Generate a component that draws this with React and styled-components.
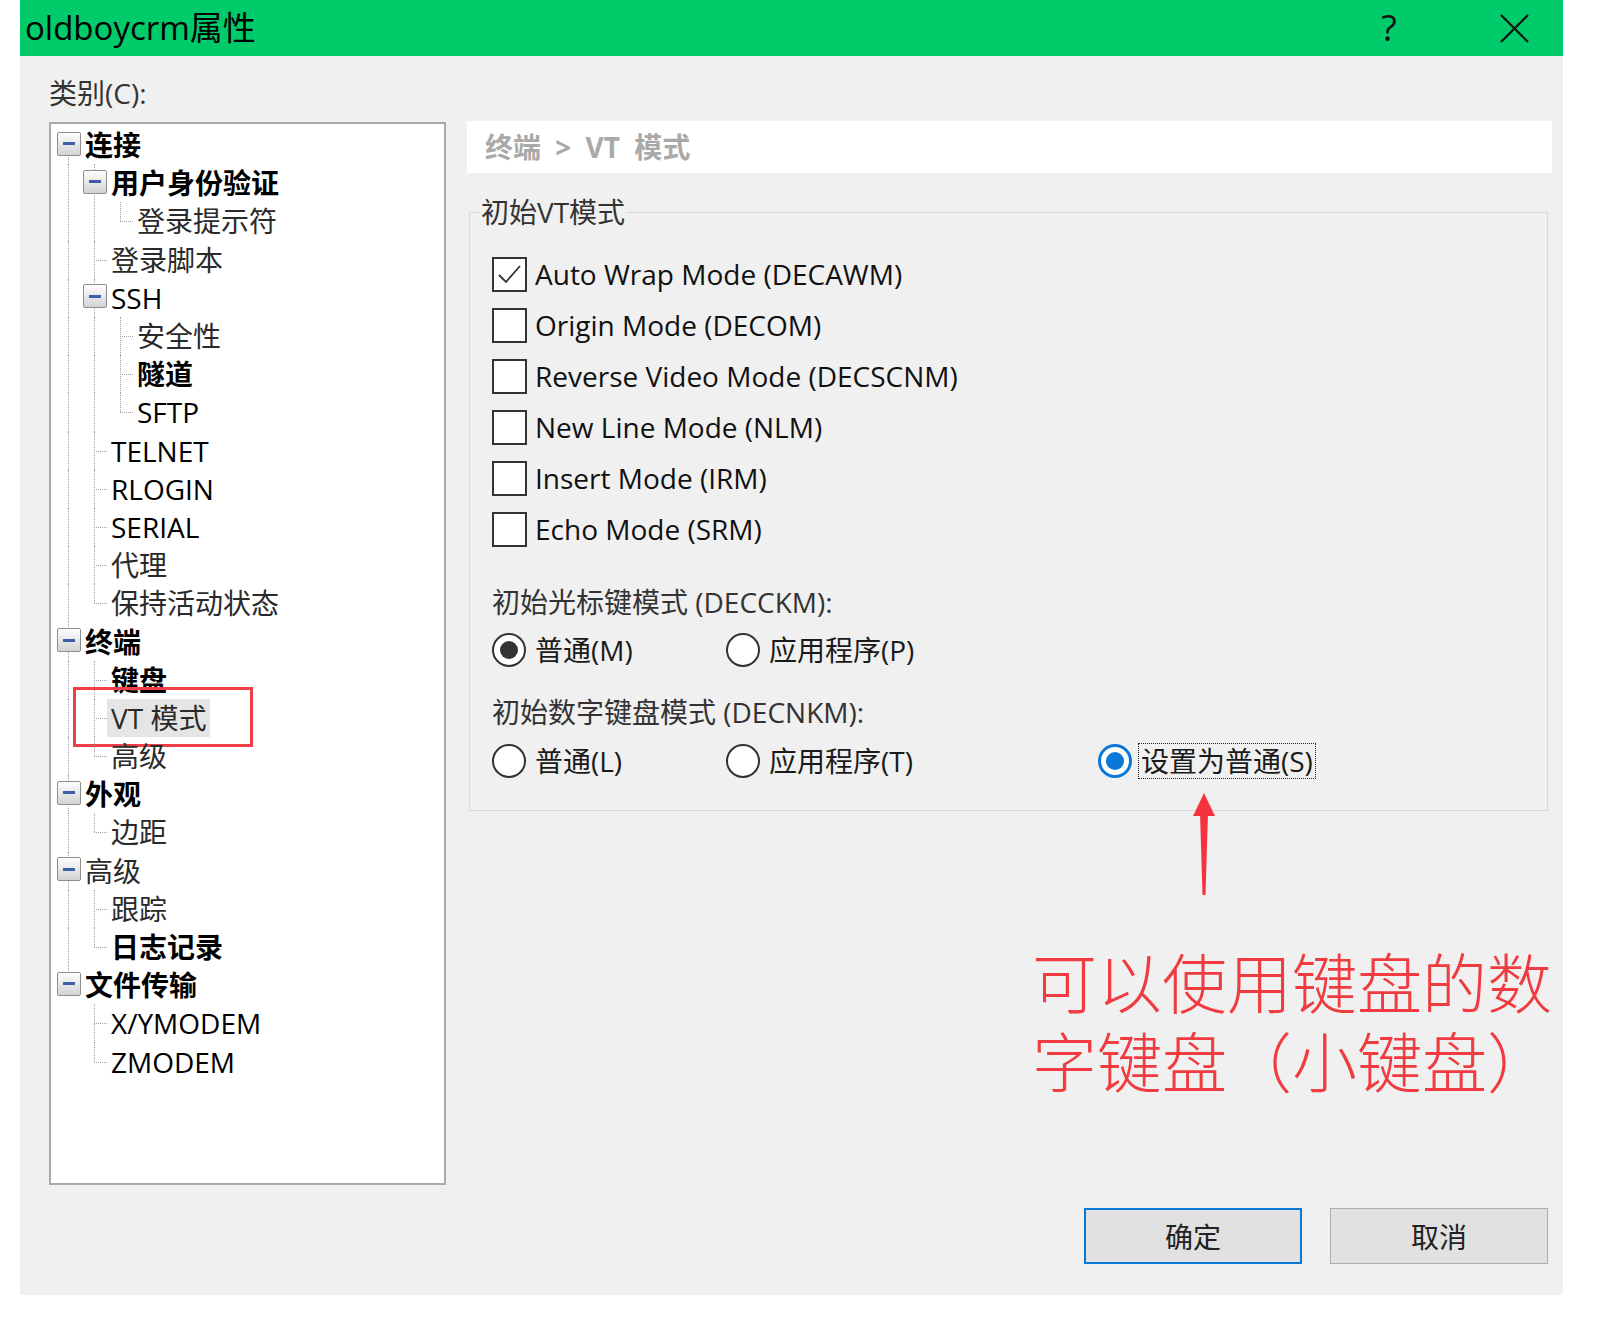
import React from "react";
import styled, { createGlobalStyle, css } from "styled-components";

const GlobalStyle = createGlobalStyle`
  html, body { margin: 0; padding: 0; background: #ffffff; }
  body { font-family: "Open Sans", "Noto Sans CJK SC", sans-serif; color: #1a1a1a; }
  * { box-sizing: border-box; }
`;

const FONT = `"Open Sans", "Noto Sans CJK SC", sans-serif`;

const Dialog = styled.div`
  margin-left: 20px;
  width: 1543px;
  display: flex;
  flex-direction: column;
  background: #f0f0f0;
`;

const TitleBar = styled.div`
  height: 56px;
  background: #00cb6a;
  display: flex;
  align-items: center;
  padding-left: 5px;
`;

const Title = styled.div`
  flex: 1;
  font-family: ${FONT};
  font-size: 33px;
  line-height: 52px;
  color: #000;
  white-space: nowrap;
`;

const CaptionButton = styled.div`
  width: 60px;
  height: 56px;
  display: flex;
  align-items: center;
  justify-content: center;
  margin-right: ${(p) => p.$gap}px;
  font-family: ${FONT};
  font-weight: 400;
  font-size: 36px;
  line-height: 1;
  color: #111;
`;

const Body = styled.div`
  padding: 20px 14px 31px 29px;
  display: flex;
  flex-direction: column;
`;

const Main = styled.div`
  display: grid;
  grid-template-columns: 397px 1fr;
  grid-template-rows: 34px 1063px;
  row-gap: 12px;
  column-gap: 21px;
`;

const CategoryLabel = styled.div`
  grid-column: 1;
  grid-row: 1;
  font-size: 28px;
  line-height: 34px;
  color: #333;
`;

const TreeBox = styled.div`
  grid-column: 1;
  grid-row: 2;
  background: #fff;
  border: 2px solid #a9a9a9;
  padding: 2px 0 0 4px;
  overflow: hidden;
`;

const TreeRow = styled.div`
  position: relative;
  display: flex;
  align-items: stretch;
  height: 38.2px;
`;

const GuideCell = styled.span`
  position: relative;
  width: 26px;
  flex: none;
  ${(p) =>
    p.$line &&
    css`
      &::before {
        content: "";
        position: absolute;
        left: 13px;
        top: 0;
        bottom: 0;
        border-left: 1px dotted #a3a3a3;
      }
    `}
`;

const ConnectorCell = styled.span`
  position: relative;
  width: 26px;
  flex: none;
  display: flex;
  align-items: center;
  justify-content: center;
  &::before {
    content: "";
    position: absolute;
    left: 13px;
    top: ${(p) => (p.$top ? "0" : "50%")};
    bottom: ${(p) => (p.$bottom ? "0" : "50%")};
    border-left: 1px dotted #a3a3a3;
  }
  &::after {
    content: "";
    position: absolute;
    left: 13px;
    right: 0;
    top: 50%;
    border-top: 1px dotted #a3a3a3;
  }
`;

const Expander = styled.span`
  position: relative;
  z-index: 1;
  width: 24px;
  height: 24px;
  margin-left: 1px;
  margin-top: -3px;
  border: 1px solid #8e8e8e;
  border-radius: 2px;
  background: linear-gradient(#fefefe, #d3d3d3);
  display: flex;
  align-items: center;
  justify-content: center;
  &::after {
    content: "";
    width: 12px;
    height: 3px;
    background: #3d5fa3;
  }
`;

const NodeLabel = styled.span`
  display: flex;
  align-items: center;
  padding: 0 4px;
  font-size: 28px;
  line-height: 38px;
  white-space: nowrap;
  font-weight: ${(p) => (p.$bold ? 700 : 400)};
  color: ${(p) => (p.$bold || p.$latin ? "#000" : "#2a2a2a")};
  background: ${(p) => (p.$selected ? "#e5e5e5" : "transparent")};
`;

const Callout = styled.span`
  position: absolute;
  left: 18px;
  top: -12px;
  width: 180px;
  height: 60px;
  border: 3px solid #ef3e46;
  pointer-events: none;
`;

const RightPane = styled.div`
  grid-column: 2;
  grid-row: 2;
  position: relative;
  display: flex;
  flex-direction: column;
`;

const PathHeader = styled.div`
  margin-top: -1px;
  height: 52px;
  background: #fff;
  padding-left: 18px;
  font-size: 28px;
  line-height: 52px;
  font-weight: 700;
  color: #a9a9a9;
  white-space: nowrap;
  word-spacing: 7px;
`;

const Group = styled.fieldset`
  margin: 22px 4px 0 2px;
  border: 1px solid #d9d9d9;
  padding: 0 0 26px 10px;
  min-width: 0;
`;

const Legend = styled.legend`
  padding: 0 1px;
  font-size: 28px;
  line-height: 34px;
  color: #333;
`;

const GroupContent = styled.div`
  padding-left: 12px;
  padding-top: 19.5px;
`;

const CheckRow = styled.label`
  height: 51px;
  display: flex;
  align-items: center;
  gap: 8px;
  font-size: 28px;
  color: #111;
  white-space: nowrap;
`;

const CheckBox = styled.span`
  width: 35px;
  height: 35px;
  flex: none;
  border: 2px solid #333;
  background: #fff;
  display: flex;
  align-items: center;
  justify-content: center;
`;

const SectionLabel = styled.div`
  margin-top: ${(p) => p.$gap}px;
  font-size: 28px;
  line-height: 34px;
  color: #333;
  white-space: nowrap;
`;

const RadioRow = styled.div`
  margin-top: ${(p) => p.$gap}px;
  height: 46px;
  display: grid;
  grid-template-columns: 234px 372px auto;
  align-items: center;
`;

const RadioItem = styled.label`
  display: flex;
  align-items: center;
  gap: 9px;
  font-size: 28px;
  color: #1a1a1a;
  white-space: nowrap;
`;

const RadioCircle = styled.span`
  width: 34px;
  height: 34px;
  flex: none;
  border-radius: 50%;
  background: #fff;
  border: ${(p) => (p.$accent ? "3px solid #0a78d6" : "2px solid #333")};
  display: flex;
  align-items: center;
  justify-content: center;
  &::after {
    content: "";
    display: ${(p) => (p.$checked ? "block" : "none")};
    width: 18px;
    height: 18px;
    border-radius: 50%;
    background: ${(p) => (p.$accent ? "#0a78d6" : "#333")};
  }
`;

const RadioText = styled.span`
  line-height: 34px;
  ${(p) =>
    p.$focused &&
    css`
      margin-left: -3px;
      padding: 0 2px;
      border: 1px dotted #222;
    `}
`;

const ArrowMark = styled.svg`
  position: absolute;
  left: 726px;
  top: 671px;
  width: 22px;
  height: 102px;
`;

const Annotation = styled.div`
  margin-top: 130px;
  padding-left: 565px;
  display: flex;
  flex-direction: column;
  font-family: "Noto Sans CJK SC", sans-serif;
  font-weight: 300;
  font-size: 65px;
  color: #f03c40;
  white-space: nowrap;
`;

const AnnotationLine = styled.div`
  height: 79px;
  line-height: 79px;
`;

const ButtonRow = styled.div`
  margin-top: 23px;
  margin-right: 1px;
  display: flex;
  justify-content: flex-end;
  gap: 28px;
`;

const DialogButton = styled.button`
  width: 218px;
  height: 56px;
  background: #e1e1e1;
  border: ${(p) => (p.$primary ? "2px solid #0a78d6" : "1px solid #adadad")};
  font-family: ${FONT};
  font-size: 28px;
  color: #222;
  padding: 0;
`;

const treeData = [
  {
    label: "连接",
    bold: true,
    children: [
      { label: "用户身份验证", bold: true, children: [{ label: "登录提示符" }] },
      { label: "登录脚本" },
      {
        label: "SSH",
        children: [{ label: "安全性" }, { label: "隧道", bold: true }, { label: "SFTP" }],
      },
      { label: "TELNET" },
      { label: "RLOGIN" },
      { label: "SERIAL" },
      { label: "代理" },
      { label: "保持活动状态" },
    ],
  },
  {
    label: "终端",
    bold: true,
    children: [{ label: "键盘", bold: true }, { label: "VT 模式", selected: true }, { label: "高级" }],
  },
  { label: "外观", bold: true, children: [{ label: "边距" }] },
  { label: "高级", children: [{ label: "跟踪" }, { label: "日志记录", bold: true }] },
  { label: "文件传输", bold: true, children: [{ label: "X/YMODEM" }, { label: "ZMODEM" }] },
];

function flatten(nodes, depth, ancestorsNext, out) {
  nodes.forEach((n, i) => {
    const hasNext = i < nodes.length - 1;
    out.push({
      ...n,
      depth,
      hasNext,
      ancestorsNext,
      isFirstRoot: depth === 0 && i === 0,
      hasChildren: !!n.children,
      latin: /^[\x20-\x7e]+$/.test(n.label),
    });
    if (n.children) flatten(n.children, depth + 1, [...ancestorsNext, hasNext], out);
  });
  return out;
}

const rows = flatten(treeData, 0, [], []);

function Tree() {
  return (
    <TreeBox>
      {rows.map((r, idx) => (
        <TreeRow key={idx}>
          {r.ancestorsNext.map((line, i) => (
            <GuideCell key={i} $line={line} />
          ))}
          <ConnectorCell $top={!r.isFirstRoot} $bottom={r.hasNext}>
            {r.hasChildren && <Expander />}
          </ConnectorCell>
          <NodeLabel $bold={r.bold} $latin={r.latin} $selected={r.selected}>
            {r.label}
          </NodeLabel>
          {r.selected && <Callout />}
        </TreeRow>
      ))}
    </TreeBox>
  );
}

const checks = [
  { label: "Auto Wrap Mode (DECAWM)", checked: true },
  { label: "Origin Mode (DECOM)" },
  { label: "Reverse Video Mode (DECSCNM)" },
  { label: "New Line Mode (NLM)" },
  { label: "Insert Mode (IRM)" },
  { label: "Echo Mode (SRM)" },
];

function Check({ checked }) {
  return (
    <CheckBox>
      {checked && (
        <svg width="27" height="27" viewBox="0 0 27 27">
          <polyline points="3,14 10,21 24,5" fill="none" stroke="#333" strokeWidth="1.8" />
        </svg>
      )}
    </CheckBox>
  );
}

function Radio({ label, checked, accent, focused }) {
  return (
    <RadioItem>
      <RadioCircle $checked={checked} $accent={accent} />
      <RadioText $focused={focused}>{label}</RadioText>
    </RadioItem>
  );
}

export default function App() {
  return (
    <>
      <GlobalStyle />
      <Dialog>
        <TitleBar>
          <Title>oldboycrm属性</Title>
          <CaptionButton $gap={65}>?</CaptionButton>
          <CaptionButton $gap={19}>
            <svg width="29" height="29" viewBox="0 0 29 29">
              <path d="M1 1 L28 28 M28 1 L1 28" stroke="#111" strokeWidth="2.2" fill="none" />
            </svg>
          </CaptionButton>
        </TitleBar>
        <Body>
          <Main>
            <CategoryLabel>类别(C):</CategoryLabel>
            <Tree />
            <RightPane>
              <PathHeader>终端 &gt; VT 模式</PathHeader>
              <Group>
                <Legend>初始VT模式</Legend>
                <GroupContent>
                  {checks.map((c) => (
                    <CheckRow key={c.label}>
                      <Check checked={c.checked} />
                      {c.label}
                    </CheckRow>
                  ))}
                  <SectionLabel $gap={30}>初始光标键模式 (DECCKM):</SectionLabel>
                  <RadioRow $gap={8}>
                    <Radio label="普通(M)" checked />
                    <Radio label="应用程序(P)" />
                  </RadioRow>
                  <SectionLabel $gap={22}>初始数字键盘模式 (DECNKM):</SectionLabel>
                  <RadioRow $gap={9}>
                    <Radio label="普通(L)" />
                    <Radio label="应用程序(T)" />
                    <Radio label="设置为普通(S)" checked accent focused />
                  </RadioRow>
                </GroupContent>
              </Group>
              <ArrowMark viewBox="0 0 22 102">
                <polygon points="11,0 0,23 22,23" fill="#f5333f" />
                <polygon points="7,20 15,20 12.5,102 9.5,102" fill="#f5333f" />
              </ArrowMark>
              <Annotation>
                <AnnotationLine>可以使用键盘的数</AnnotationLine>
                <AnnotationLine>字键盘（小键盘）</AnnotationLine>
              </Annotation>
            </RightPane>
          </Main>
          <ButtonRow>
            <DialogButton $primary>确定</DialogButton>
            <DialogButton>取消</DialogButton>
          </ButtonRow>
        </Body>
      </Dialog>
    </>
  );
}
